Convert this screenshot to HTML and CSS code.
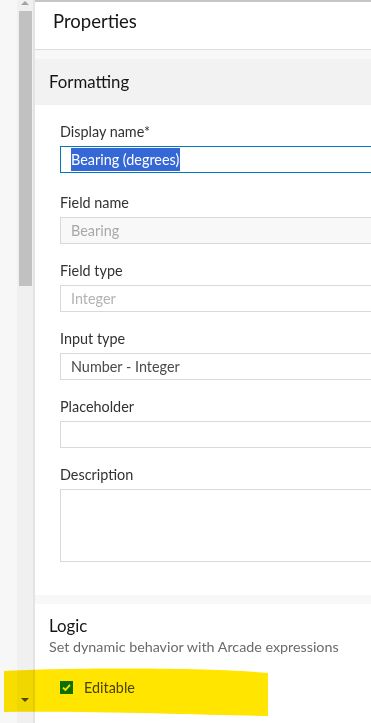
FILE: index.html
```html
<!DOCTYPE html>
<html lang="en">
<head>
  <meta charset="UTF-8" />
  <meta name="viewport" content="width=device-width, initial-scale=1.0"/>
  <title>Properties</title>
  <link rel="stylesheet" href="styles.css">
</head>
<body>
  <div class="page">
    <div class="rail"></div>

    <div class="scrollbar">
      <span class="arrow up"></span>
      <div class="thumb"></div>
      <span class="arrow down"></span>
    </div>

    <div class="panel">
      <div class="panel-header">Properties</div>
      <div class="band"></div>

      <div class="section-title">Formatting</div>

      <form class="fields">
        <div class="field first">
          <label>Display name*</label>
          <div class="input focused"><span class="selected">Bearing (degrees)</span></div>
        </div>
        <div class="field">
          <label>Field name</label>
          <div class="input disabled">Bearing</div>
        </div>
        <div class="field">
          <label>Field type</label>
          <div class="input muted">Integer</div>
        </div>
        <div class="field">
          <label>Input type</label>
          <div class="input">Number - Integer</div>
        </div>
        <div class="field">
          <label>Placeholder</label>
          <div class="input"></div>
        </div>
        <div class="field">
          <label>Description</label>
          <div class="input textarea"></div>
        </div>
      </form>

      <div class="band"></div>

      <div class="logic">
        <div class="logic-title">Logic</div>
        <div class="logic-sub">Set dynamic behavior with Arcade expressions</div>
        <div class="check-row">
          <span class="checkbox">
            <svg width="13" height="13" viewBox="0 0 13 13"><path d="M3 6.6 L5.4 9 L10 3.8" fill="none" stroke="#fff" stroke-width="1.8"/></svg>
          </span>
          <span>Editable</span>
        </div>
      </div>
    </div>
  </div>

  <!-- highlighter stroke drawn over the screenshot -->
  <svg class="marker" width="371" height="723" viewBox="0 0 371 723">
    <path d="M4 671 C 60 668, 200 667, 268 673 L 268 716 C 200 715, 100 711, 4 712 Z" fill="#ffe500"/>
  </svg>
</body>
</html>
```

FILE: styles.css
```css
body {
  margin: 0;
  font-family: Lato, "Open Sans", sans-serif;
  background: #fff;
  overflow: hidden;
}

.page {
  display: flex;
  width: 371px;
  height: 723px;
  overflow: hidden;
}

.rail {
  flex-shrink: 0;
  width: 17px;
  background: #f7f7f7;
}

.scrollbar {
  flex-shrink: 0;
  width: 16px;
  background: #f0f0f0;
  border-right: 2px solid #e4e4e4;
  display: flex;
  flex-direction: column;
  align-items: center;
}

.arrow {
  width: 0;
  height: 0;
  border-left: 4px solid transparent;
  border-right: 4px solid transparent;
}

.arrow.up {
  margin-top: 1px;
  border-bottom: 4px solid #a3a3a3;
}

.arrow.down {
  margin-top: 412px;
  border-top: 4px solid #505050;
}

.thumb {
  width: 13px;
  height: 275px;
  margin-top: 6px;
  background: #c1c1c1;
}

.panel {
  flex: 1;
  min-width: 0;
  overflow: hidden;
  border-top: 2px solid #c6c6c6;
}

.panel-header {
  height: 47px;
  line-height: 39px;
  padding-left: 18px;
  font-size: 18.5px;
  color: #151515;
  border-bottom: 1px solid #dddddd;
}

.band {
  height: 9px;
  background: #f8f8f8;
}

.section-title {
  height: 46px;
  line-height: 46px;
  padding-left: 14px;
  font-size: 16.8px;
  color: #151515;
  background: #f2f2f2;
}

.fields {
  padding: 17px 0 33px 25px;
}

.field {
  margin-bottom: 17px;
}

.field.first {
  margin-bottom: 20px;
}

.field:last-child {
  margin-bottom: 0;
}

.field label {
  display: block;
  height: 20px;
  line-height: 20px;
  margin-bottom: 4px;
  font-size: 14.4px;
  color: #323232;
}

.input {
  box-sizing: border-box;
  width: calc(100% + 20px);
  height: 27px;
  line-height: 25px;
  padding-left: 10px;
  border: 1px solid #d9d9d9;
  font-size: 14.4px;
  color: #4a4a4a;
  background: #fff;
}

.input.focused {
  border-color: #0079c1;
  padding-top: 1px;
  line-height: 23px;
}

.selected {
  display: inline-block;
  background: #3667d6;
  color: #fff;
  height: 23px;
  padding-right: 1px;
}

.input.disabled {
  background: #f8f8f8;
  color: #a8a8a8;
}

.input.muted {
  color: #b2b2b2;
}

.input.textarea {
  height: 73px;
}

.logic {
  padding: 12px 0 0 14px;
}

.logic-title {
  font-size: 16.8px;
  line-height: 20px;
  color: #151515;
}

.logic-sub {
  font-size: 14.3px;
  line-height: 20px;
  color: #6a6a6a;
  margin-top: 1px;
}

.check-row {
  display: flex;
  align-items: center;
  gap: 11px;
  margin-top: 22px;
  padding-left: 11px;
  font-size: 14.4px;
  color: #4a4a4a;
}

.checkbox {
  width: 13px;
  height: 13px;
  background: #0b7d0b;
  display: flex;
}

.marker {
  position: absolute;
  left: 0;
  top: 0;
  mix-blend-mode: multiply;
  pointer-events: none;
}
```
